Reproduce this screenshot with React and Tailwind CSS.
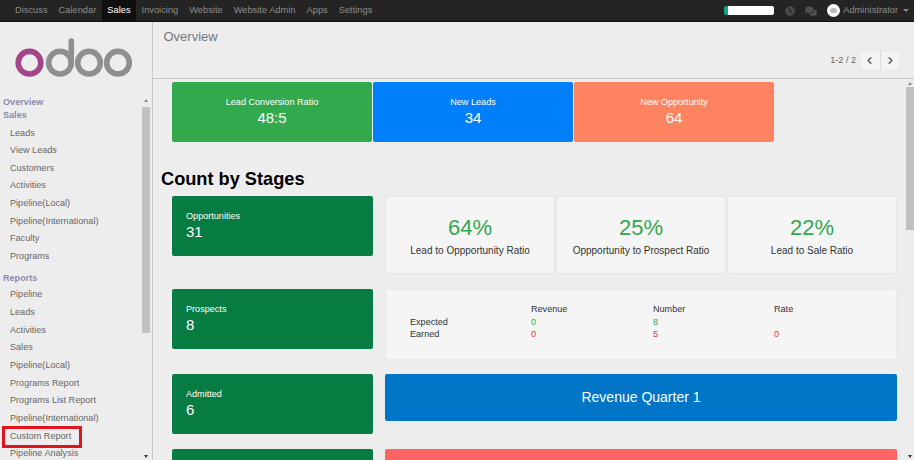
import { ChevronLeft, ChevronRight } from 'lucide-react'
import { FaClock, FaComments } from 'react-icons/fa'

const NAV = ['Discuss', 'Calendar', 'Sales', 'Invoicing', 'Website', 'Website Admin', 'Apps', 'Settings']
const SALES = ['Leads', 'View Leads', 'Customers', 'Activities', 'Pipeline(Local)', 'Pipeline(International)', 'Faculty', 'Programs']
const REPORTS = ['Pipeline', 'Leads', 'Activities', 'Sales', 'Pipeline(Local)', 'Programs Report', 'Programs List Report', 'Pipeline(International)']

function TopBar() {
  return (
    <div className="flex h-[22px] shrink-0 items-center bg-[#242424] border-b border-[#111] text-[9.3px] text-[#8c8c8c]">
      <div className="flex h-full items-center pl-[9.5px]">
        {NAV.map(n => (
          <span key={n} className={n === 'Sales' ? 'flex h-full items-center bg-[#0f0f0f] px-[5.5px] text-white' : 'flex h-full items-center px-[5.5px]'}>{n}</span>
        ))}
      </div>
      <div className="ml-auto flex items-center pr-[5px]">
        <div className="h-[9px] w-[50px] rounded-[2px] bg-white border-l-[4px] border-[#12a58a]" />
        <FaClock size={10} className="ml-[11px] text-[#4a4a4a]" />
        <FaComments size={12} className="ml-[10px] text-[#4f4f4f]" />
        <div className="ml-[10px] flex h-[13px] w-[13px] items-center justify-center rounded-full bg-white">
          <div className="h-[5px] w-[7px] rounded-full bg-[#bbb]" />
        </div>
        <span className="ml-[3px]">Administrator</span>
        <span className="ml-[5px] h-0 w-0 border-x-[3px] border-t-[3px] border-x-transparent border-t-[#8c8c8c]" />
      </div>
    </div>
  )
}

function Logo() {
  return (
    <svg width="120" height="42" viewBox="0 0 120 42" fill="none" strokeWidth="5.6">
      <circle cx="15.5" cy="24.7" r="11.3" stroke="#a24689" />
      <circle cx="46" cy="24.7" r="11.3" stroke="#8f8f8f" />
      <path d="M57.3 3 V24.7" stroke="#8f8f8f" strokeLinecap="round" />
      <circle cx="75" cy="24.7" r="11.3" stroke="#8f8f8f" />
      <circle cx="104" cy="24.7" r="11.3" stroke="#8f8f8f" />
    </svg>
  )
}

function Scrollbar({ thumbTop, thumbHeight }) {
  return (
    <div className="flex w-[8px] shrink-0 flex-col items-center">
      <span className="mt-[3px] h-0 w-0 border-x-[2px] border-b-[3px] border-x-transparent border-b-[#888]" />
      <div style={{ marginTop: thumbTop, height: thumbHeight }} className="w-full bg-[#c1c1c1]" />
      <span className="mt-auto mb-[2px] h-0 w-0 border-x-[2px] border-t-[3px] border-x-transparent border-t-[#333]" />
    </div>
  )
}

function SideItem({ children }) {
  return <div className="flex h-[17.67px] items-center pl-[10px] text-[9.1px] text-[#666]">{children}</div>
}

function Sidebar() {
  return (
    <div className="flex w-[153px] shrink-0 flex-col border-r border-[#c8c8c8] bg-[#eeedee]">
      <div className="h-[74px] shrink-0 pl-[14px] pt-[16px]"><Logo /></div>
      <div className="flex min-h-0 flex-1">
        <div className="min-w-0 flex-1 overflow-hidden">
          <div className="pl-[3px] text-[9.1px] font-bold leading-[13px] text-[#8a8ab0]">Overview</div>
          <div className="pl-[3px] text-[9.1px] font-bold leading-[13px] text-[#8a8ab0]">Sales</div>
          <div className="mt-[2.5px]">{SALES.map(s => <SideItem key={s}>{s}</SideItem>)}</div>
          <div className="mt-[5.5px] h-[15px] pl-[3px] text-[9.1px] font-bold leading-[15px] text-[#8a8ab0]">Reports</div>
          <div>{REPORTS.map((s, i) => <SideItem key={s + i}>{s}</SideItem>)}</div>
          <div className="-mt-[2px] ml-[2px] flex h-[22px] w-[80px] items-center border-[3px] border-[#e0131f] pl-[5px] text-[9.1px] text-[#666]">Custom Report</div>
          <div className="-mt-[3px]"><SideItem>Pipeline Analysis</SideItem></div>
        </div>
        <div className="mr-[2px] flex"><Scrollbar thumbTop={5} thumbHeight={226} /></div>
      </div>
    </div>
  )
}

function TopStat({ label, value, color }) {
  return (
    <div className={`flex h-[60px] w-[200px] flex-col items-center rounded-[2px] pt-[14px] text-white ${color}`}>
      <span className="text-[9.1px] leading-[13px]">{label}</span>
      <span className="-mt-[1px] text-[15px] leading-[20px]">{value}</span>
    </div>
  )
}

function StageCard({ label, value }) {
  return (
    <div className="h-[60px] w-[201px] shrink-0 rounded-[2px] bg-[#067c43] pl-[14px] pt-[14px] text-white">
      <div className="text-[9.1px] leading-[13px]">{label}</div>
      <div className="-mt-[1px] text-[15px] leading-[20px]">{value}</div>
    </div>
  )
}

function Ratio({ value, label }) {
  return (
    <div className="flex h-[78px] w-[170px] flex-col items-center rounded-[2px] border border-[#e6e6e6] bg-[#f5f5f5] pt-[18px]">
      <span className="text-[22px] leading-[26px] text-[#32a84f]">{value}</span>
      <span className="mt-[3px] text-[10px] leading-[14px] text-[#333]">{label}</span>
    </div>
  )
}

function Main() {
  return (
    <div className="flex min-w-0 flex-1 flex-col bg-[#eeedee]">
      <div className="flex h-[57px] shrink-0 flex-col border-b border-[#c8c8c8] pl-[10.5px]">
        <div className="mt-[6px] text-[13px] leading-[18px] text-[#777]">Overview</div>
        <div className="mt-[4px] flex items-center justify-end pr-[13px]">
          <span className="mr-[3px] text-[9.1px] text-[#666]">1-2 / 2</span>
          <div className="flex h-[21px] w-[42px] rounded-[2px] border border-[#e6e6e6] bg-[#f3f3f3] text-[#555]">
            <div className="flex flex-1 items-center justify-center border-r border-[#ddd]"><ChevronLeft size={11} strokeWidth={3} /></div>
            <div className="flex flex-1 items-center justify-center"><ChevronRight size={11} strokeWidth={3} /></div>
          </div>
        </div>
      </div>
      <div className="flex min-h-0 flex-1">
        <div className="min-w-0 flex-1 overflow-hidden pl-[19px] pt-[3px]">
          <div className="flex gap-[1px]">
            <TopStat label="Lead Conversion Ratio" value="48:5" color="bg-[#33a94d]" />
            <TopStat label="New Leads" value="34" color="bg-[#007ffb]" />
            <TopStat label="New Opportunity" value="64" color="bg-[#ff8361]" />
          </div>
          <h2 className="-ml-[11px] mt-[26px] text-[18.2px] font-bold leading-[22px] text-black">Count by Stages</h2>
          <div className="mt-[6px] flex gap-[12px]">
            <StageCard label="Opportunities" value="31" />
            <div className="flex w-[512px] gap-[1px]">
              <Ratio value="64%" label="Lead to Oppportunity Ratio" />
              <Ratio value="25%" label="Oppportunity to Prospect Ratio" />
              <Ratio value="22%" label="Lead to Sale Ratio" />
            </div>
          </div>
          <div className="mt-[15px] flex gap-[12px]">
            <StageCard label="Prospects" value="8" />
            <div className="h-[71px] w-[512px] rounded-[2px] border border-[#e8e8e8] bg-[#f5f5f5] pl-[24px] pt-[13px] text-[9.1px] leading-[12.5px] text-[#333]">
              <div className="grid grid-cols-[121px_122px_121px_1fr]">
                <span /><span>Revenue</span><span>Number</span><span>Rate</span>
                <span>Expected</span><span className="text-[#32a84f]">0</span><span className="text-[#32a84f]">8</span><span />
                <span>Earned</span><span className="text-[#e8304a]">0</span><span className="text-[#e8304a]">5</span><span className="text-[#e8304a]">0</span>
              </div>
            </div>
          </div>
          <div className="mt-[14px] flex gap-[12px]">
            <StageCard label="Admitted" value="6" />
            <div className="flex h-[47px] w-[512px] items-center justify-center rounded-[2px] bg-[#0176c8] text-[14px] text-white">Revenue Quarter 1</div>
          </div>
          <div className="mt-[15px] flex gap-[12px]">
            <div className="h-[60px] w-[201px] shrink-0 rounded-[2px] bg-[#067c43]" />
            <div className="h-[47px] w-[512px] rounded-[2px] bg-[#ff6464]" />
          </div>
        </div>
        <Scrollbar thumbTop={2} thumbHeight={143} />
      </div>
    </div>
  )
}

export default function App() {
  return (
    <div className="flex h-[460px] w-[914px] flex-col overflow-hidden bg-[#eeedee] font-['Liberation_Sans',Arial,sans-serif]">
      <TopBar />
      <div className="flex min-h-0 flex-1">
        <Sidebar />
        <Main />
      </div>
    </div>
  )
}
